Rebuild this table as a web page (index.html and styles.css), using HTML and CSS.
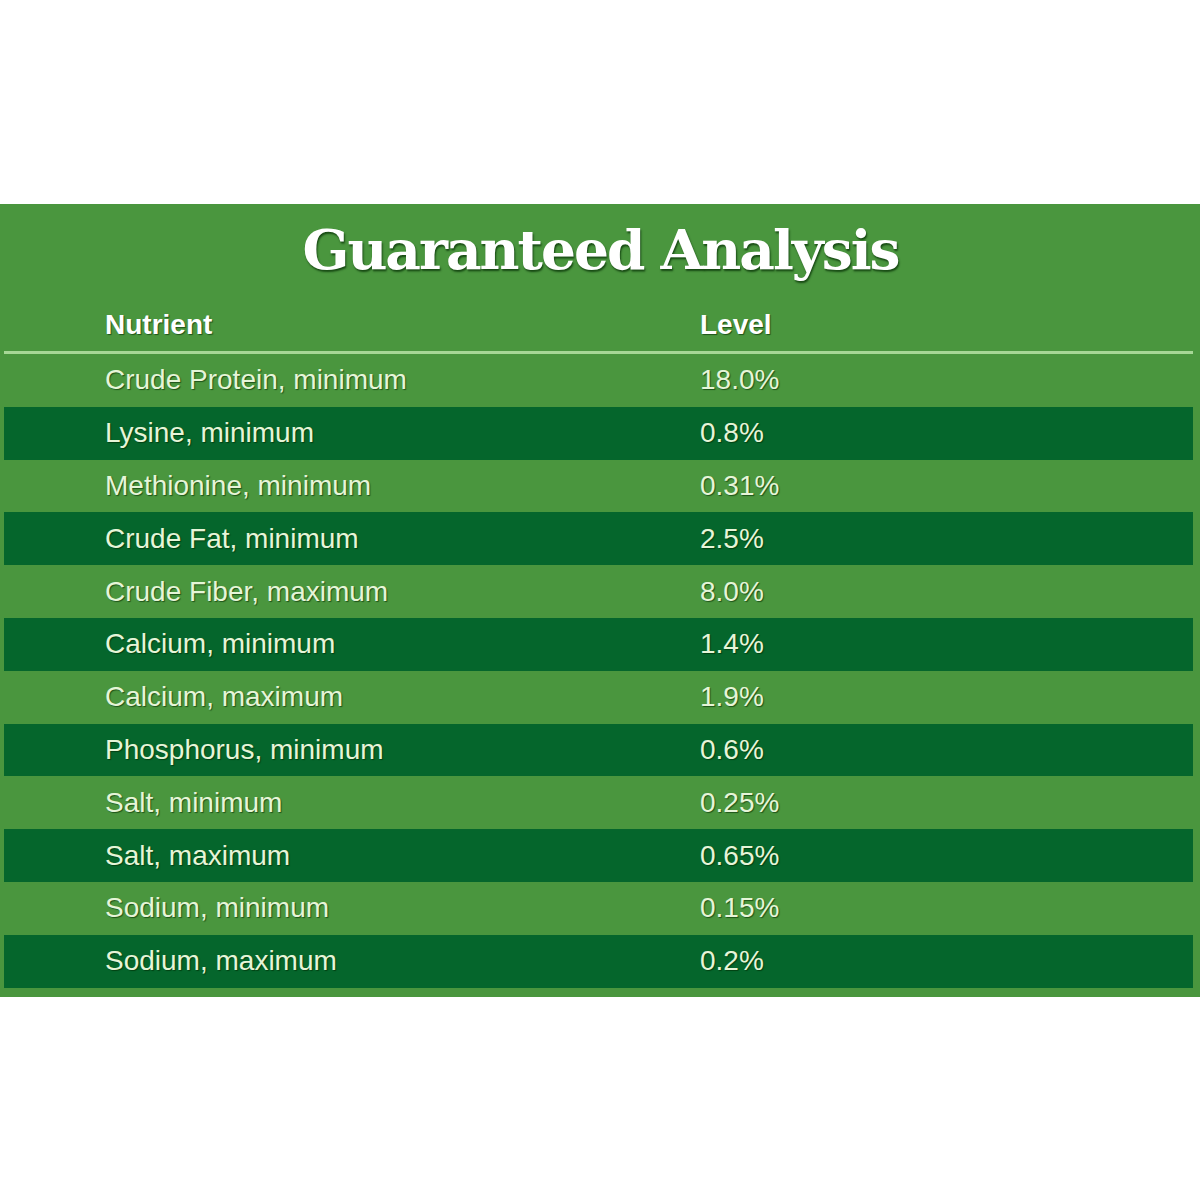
FILE: index.html
```html
<!DOCTYPE html>
<html>
<head>
<meta charset="utf-8">
<link rel="stylesheet" href="styles.css">
</head>
<body>
<div class="page">
  <section class="panel">
    <h1 class="title">Guaranteed Analysis</h1>
    <div class="head">
      <span class="c1">Nutrient</span>
      <span class="c2">Level</span>
    </div>
    <div class="rows">
      <div class="row"><span class="c1">Crude Protein, minimum</span><span class="c2">18.0%</span></div>
      <div class="row dark"><span class="c1">Lysine, minimum</span><span class="c2">0.8%</span></div>
      <div class="row"><span class="c1">Methionine, minimum</span><span class="c2">0.31%</span></div>
      <div class="row dark"><span class="c1">Crude Fat, minimum</span><span class="c2">2.5%</span></div>
      <div class="row"><span class="c1">Crude Fiber, maximum</span><span class="c2">8.0%</span></div>
      <div class="row dark"><span class="c1">Calcium, minimum</span><span class="c2">1.4%</span></div>
      <div class="row"><span class="c1">Calcium, maximum</span><span class="c2">1.9%</span></div>
      <div class="row dark"><span class="c1">Phosphorus, minimum</span><span class="c2">0.6%</span></div>
      <div class="row"><span class="c1">Salt, minimum</span><span class="c2">0.25%</span></div>
      <div class="row dark"><span class="c1">Salt, maximum</span><span class="c2">0.65%</span></div>
      <div class="row"><span class="c1">Sodium, minimum</span><span class="c2">0.15%</span></div>
      <div class="row dark"><span class="c1">Sodium, maximum</span><span class="c2">0.2%</span></div>
    </div>
  </section>
</div>
</body>
</html>
```
FILE: styles.css
```css
html, body {
  margin: 0;
  padding: 0;
  background: #ffffff;
}
.page {
  width: 1200px;
  height: 1200px;
  padding-top: 204px;
  box-sizing: border-box;
}
.panel {
  background: #4a963e;
  height: 793px;
  padding: 0 7px 0 4px;
  box-sizing: border-box;
  display: flex;
  flex-direction: column;
  font-family: "Liberation Sans", Arial, sans-serif;
}
.title {
  margin: 0;
  height: 91px;
  flex: none;
  display: flex;
  align-items: center;
  justify-content: center;
  padding-left: 4px;
  font-family: "DejaVu Serif", serif;
  font-weight: bold;
  font-size: 55px;
  letter-spacing: -2px;
  color: #ffffff;
  text-shadow: 1px 2px 2px rgba(0, 40, 0, 0.7);
}
.head {
  display: flex;
  flex: none;
  align-items: center;
  height: 59px;
  padding-top: 4px;
  box-sizing: border-box;
  border-bottom: 3px solid #a7d796;
  font-weight: bold;
  font-size: 28px;
  color: #ffffff;
  text-shadow: 1px 1px 1px rgba(0, 40, 0, 0.6);
}
.c1 {
  width: 595px;
  padding-left: 101px;
  flex: none;
}
.c2 {
  flex: 1;
}
.rows {
  display: flex;
  flex-direction: column;
}
.row {
  display: flex;
  align-items: center;
  height: 52.8px;
  font-size: 28px;
  color: #e6f5d8;
  text-shadow: 1px 1px 1px rgba(0, 40, 0, 0.6);
}
.row.dark {
  background: #05662c;
}
```
